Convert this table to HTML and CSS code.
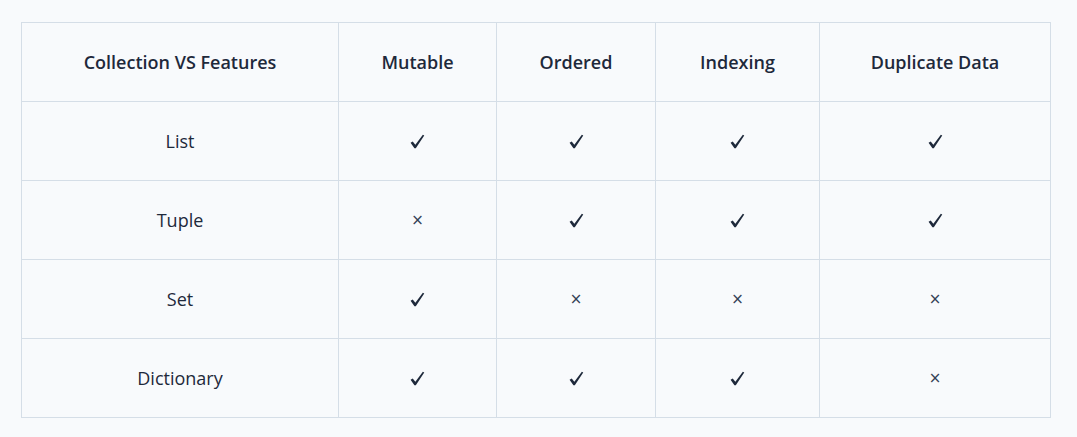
FILE: index.html
```html
<!DOCTYPE html>
<html>
<head>
<meta charset="utf-8">
<link rel="stylesheet" href="styles.css">
</head>
<body>
<div class="wrap">
<table class="cmp">
  <colgroup>
    <col class="c1"><col class="c2"><col class="c3"><col class="c4"><col class="c5">
  </colgroup>
  <thead>
    <tr><th>Collection VS Features</th><th>Mutable</th><th>Ordered</th><th>Indexing</th><th>Duplicate Data</th></tr>
  </thead>
  <tbody>
    <tr><td>List</td><td class="y"><svg class="chk" viewBox="0 0 16 16" role="img" aria-label="yes"><polygon points="0.6,9.2 2.9,7.9 5.7,11.4 13.7,0.8 15.2,1.7 6.2,15.2 4.7,15.2"/></svg></td><td class="y"><svg class="chk" viewBox="0 0 16 16" role="img" aria-label="yes"><polygon points="0.6,9.2 2.9,7.9 5.7,11.4 13.7,0.8 15.2,1.7 6.2,15.2 4.7,15.2"/></svg></td><td class="y"><svg class="chk" viewBox="0 0 16 16" role="img" aria-label="yes"><polygon points="0.6,9.2 2.9,7.9 5.7,11.4 13.7,0.8 15.2,1.7 6.2,15.2 4.7,15.2"/></svg></td><td class="y"><svg class="chk" viewBox="0 0 16 16" role="img" aria-label="yes"><polygon points="0.6,9.2 2.9,7.9 5.7,11.4 13.7,0.8 15.2,1.7 6.2,15.2 4.7,15.2"/></svg></td></tr>
    <tr><td>Tuple</td><td class="n">×</td><td class="y"><svg class="chk" viewBox="0 0 16 16" role="img" aria-label="yes"><polygon points="0.6,9.2 2.9,7.9 5.7,11.4 13.7,0.8 15.2,1.7 6.2,15.2 4.7,15.2"/></svg></td><td class="y"><svg class="chk" viewBox="0 0 16 16" role="img" aria-label="yes"><polygon points="0.6,9.2 2.9,7.9 5.7,11.4 13.7,0.8 15.2,1.7 6.2,15.2 4.7,15.2"/></svg></td><td class="y"><svg class="chk" viewBox="0 0 16 16" role="img" aria-label="yes"><polygon points="0.6,9.2 2.9,7.9 5.7,11.4 13.7,0.8 15.2,1.7 6.2,15.2 4.7,15.2"/></svg></td></tr>
    <tr><td>Set</td><td class="y"><svg class="chk" viewBox="0 0 16 16" role="img" aria-label="yes"><polygon points="0.6,9.2 2.9,7.9 5.7,11.4 13.7,0.8 15.2,1.7 6.2,15.2 4.7,15.2"/></svg></td><td class="n">×</td><td class="n">×</td><td class="n">×</td></tr>
    <tr><td>Dictionary</td><td class="y"><svg class="chk" viewBox="0 0 16 16" role="img" aria-label="yes"><polygon points="0.6,9.2 2.9,7.9 5.7,11.4 13.7,0.8 15.2,1.7 6.2,15.2 4.7,15.2"/></svg></td><td class="y"><svg class="chk" viewBox="0 0 16 16" role="img" aria-label="yes"><polygon points="0.6,9.2 2.9,7.9 5.7,11.4 13.7,0.8 15.2,1.7 6.2,15.2 4.7,15.2"/></svg></td><td class="y"><svg class="chk" viewBox="0 0 16 16" role="img" aria-label="yes"><polygon points="0.6,9.2 2.9,7.9 5.7,11.4 13.7,0.8 15.2,1.7 6.2,15.2 4.7,15.2"/></svg></td><td class="n">×</td></tr>
  </tbody>
</table>
</div>
</body>
</html>
```
FILE: styles.css
```css
html, body { margin: 0; padding: 0; background: #f8fafc; }
body { font-family: "Open Sans", "Lato", sans-serif; color: #1e293b; }
.wrap { padding: 22px 26px 0 21px; }
.cmp { border-collapse: collapse; width: 1029px; table-layout: fixed; background: #f8fafc; }
.c1 { width: 317px; } .c2 { width: 158px; } .c3 { width: 159px; } .c4 { width: 164px; } .c5 { width: 231px; }
.cmp th, .cmp td { border: 1px solid #d5dee7; text-align: center; vertical-align: middle; height: 78px; padding: 0; font-size: 18px; }
.cmp th { font-weight: 600; }
.cmp td { font-weight: 400; }
.cmp td.n { font-family: "DejaVu Sans", sans-serif; font-size: 15px; color: #334155; }
.chk { width: 15px; height: 15px; fill: #1e293b; display: block; margin: 0 auto; }
```
